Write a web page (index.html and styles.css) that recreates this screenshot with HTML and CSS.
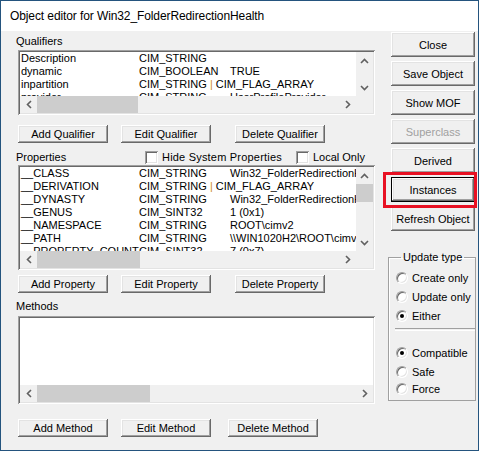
FILE: index.html
```html
<!DOCTYPE html>
<html lang="en">
<head>
    <meta charset="UTF-8">
    <meta name="viewport" content="width=device-width, initial-scale=1.0">
    <title>Object editor</title>
    <link rel="stylesheet" href="styles.css">
</head>
<body>

<div class="window">
    <div class="titlebar">Object editor for Win32_FolderRedirectionHealth</div>

    <div class="client">
        <!-- Left side: qualifiers, properties, methods -->
        <div class="left">
            <div class="label">Qualifiers</div>
            <div class="listbox qual">
                <div class="list-area">
                    <div class="row"><span class="c-name">Description</span><span class="c-type">CIM_STRING</span><span class="c-val"></span></div>
                    <div class="row"><span class="c-name">dynamic</span><span class="c-type">CIM_BOOLEAN</span><span class="c-val">TRUE</span></div>
                    <div class="row"><span class="c-name">inpartition</span><span class="c-type">CIM_STRING <i class="bar">|</i> CIM_FLAG_ARRAY</span><span class="c-val"></span></div>
                    <div class="row"><span class="c-name">provider</span><span class="c-type">CIM_STRING</span><span class="c-val">UserProfileProvider</span></div>
                </div>
                <div class="vscroll">
                    <span class="arr"><svg width="9" height="6" viewBox="0 0 9 6"><path d="M1 5 L4.5 1.5 L8 5" fill="none" stroke="#606060" stroke-width="1.6"/></svg></span>
                    <span class="vtrack"></span>
                    <span class="arr"><svg width="9" height="6" viewBox="0 0 9 6"><path d="M1 1 L4.5 4.5 L8 1" fill="none" stroke="#606060" stroke-width="1.6"/></svg></span>
                </div>
                <div class="hscroll">
                    <span class="arr"><svg width="6" height="9" viewBox="0 0 6 9"><path d="M5 1 L1.5 4.5 L5 8" fill="none" stroke="#606060" stroke-width="1.6"/></svg></span>
                    <span class="htrack"><span class="hthumb" style="width: 101px"></span></span>
                    <span class="arr"><svg width="6" height="9" viewBox="0 0 6 9"><path d="M1 1 L4.5 4.5 L1 8" fill="none" stroke="#606060" stroke-width="1.6"/></svg></span>
                </div>
                <div class="corner"></div>
            </div>
            <div class="btn-row">
                <button class="btn">Add Qualifier</button>
                <button class="btn btn-mid">Edit Qualifier</button>
                <button class="btn btn-del">Delete Qualifier</button>
            </div>

            <div class="prop-head">
                <span class="label">Properties</span>
                <label class="check hide-sys"><span class="box"></span>Hide System Properties</label>
                <label class="check local"><span class="box"></span>Local Only</label>
            </div>
            <div class="listbox props">
                <div class="list-area">
                    <div class="row"><span class="c-name">__CLASS</span><span class="c-type">CIM_STRING</span><span class="c-val">Win32_FolderRedirectionHealth</span></div>
                    <div class="row"><span class="c-name">__DERIVATION</span><span class="c-type">CIM_STRING <i class="bar">|</i> CIM_FLAG_ARRAY</span><span class="c-val"></span></div>
                    <div class="row"><span class="c-name">__DYNASTY</span><span class="c-type">CIM_STRING</span><span class="c-val">Win32_FolderRedirectionHealth</span></div>
                    <div class="row"><span class="c-name">__GENUS</span><span class="c-type">CIM_SINT32</span><span class="c-val">1 (0x1)</span></div>
                    <div class="row"><span class="c-name">__NAMESPACE</span><span class="c-type">CIM_STRING</span><span class="c-val">ROOT\cimv2</span></div>
                    <div class="row"><span class="c-name">__PATH</span><span class="c-type">CIM_STRING</span><span class="c-val">\\WIN1020H2\ROOT\cimv2:Win32_FolderRedirectionHealth</span></div>
                    <div class="row"><span class="c-name">__PROPERTY_COUNT</span><span class="c-type">CIM_SINT32</span><span class="c-val">7 (0x7)</span></div>
                </div>
                <div class="vscroll">
                    <span class="arr"><svg width="9" height="6" viewBox="0 0 9 6"><path d="M1 5 L4.5 1.5 L8 5" fill="none" stroke="#606060" stroke-width="1.6"/></svg></span>
                    <span class="vtrack"><span class="vthumb"></span></span>
                    <span class="arr"><svg width="9" height="6" viewBox="0 0 9 6"><path d="M1 1 L4.5 4.5 L8 1" fill="none" stroke="#606060" stroke-width="1.6"/></svg></span>
                </div>
                <div class="hscroll">
                    <span class="arr"><svg width="6" height="9" viewBox="0 0 6 9"><path d="M5 1 L1.5 4.5 L5 8" fill="none" stroke="#606060" stroke-width="1.6"/></svg></span>
                    <span class="htrack"><span class="hthumb" style="width: 103px"></span></span>
                    <span class="arr"><svg width="6" height="9" viewBox="0 0 6 9"><path d="M1 1 L4.5 4.5 L1 8" fill="none" stroke="#606060" stroke-width="1.6"/></svg></span>
                </div>
                <div class="corner"></div>
            </div>
            <div class="btn-row prop-btns">
                <button class="btn">Add Property</button>
                <button class="btn btn-mid">Edit Property</button>
                <button class="btn btn-del">Delete Property</button>
            </div>

            <div class="label methods-label">Methods</div>
            <div class="listbox methods">
                <div class="list-area"></div>
                <div class="hscroll">
                    <span class="arr"><svg width="6" height="9" viewBox="0 0 6 9"><path d="M5 1 L1.5 4.5 L5 8" fill="none" stroke="#606060" stroke-width="1.6"/></svg></span>
                    <span class="htrack"><span class="hthumb" style="width: 113px"></span></span>
                    <span class="arr"><svg width="6" height="9" viewBox="0 0 6 9"><path d="M1 1 L4.5 4.5 L1 8" fill="none" stroke="#606060" stroke-width="1.6"/></svg></span>
                </div>
            </div>
            <div class="btn-row methods-btns">
                <button class="btn">Add Method</button>
                <button class="btn btn-mid">Edit Method</button>
                <button class="btn btn-delm">Delete Method</button>
            </div>
        </div>

        <!-- Right side: command buttons and update type -->
        <div class="right">
            <button class="btn side">Close</button>
            <button class="btn side">Save Object</button>
            <button class="btn side">Show MOF</button>
            <button class="btn side" disabled>Superclass</button>
            <button class="btn side">Derived</button>
            <div class="highlight">
                <button class="btn side default">Instances</button>
            </div>
            <button class="btn side">Refresh Object</button>

            <fieldset class="group">
                <legend>Update type</legend>
                <label class="radio"><span class="dot"></span>Create only</label>
                <label class="radio"><span class="dot"></span>Update only</label>
                <label class="radio"><span class="dot on"></span>Either</label>
                <div class="sep"></div>
                <label class="radio compat"><span class="dot on"></span>Compatible</label>
                <label class="radio"><span class="dot"></span>Safe</label>
                <label class="radio force"><span class="dot"></span>Force</label>
            </fieldset>
        </div>
    </div>
</div>

</body>
</html>
```

FILE: styles.css
```css
body {
    margin: 0;
    padding: 0;
    font-family: 'Liberation Sans', Arial, sans-serif;
    font-size: 11px;
    color: #000;
    background-color: #f0f0f0;
}
.window {
    width: 479px;
    height: 451px;
    box-sizing: border-box;
    border: 1px solid #24547e;
    background-color: #f0f0f0;
    display: flex;
    flex-direction: column;
}
.titlebar {
    height: 30px;
    line-height: 30px;
    padding-left: 9px;
    background-color: #ffffff;
    font-size: 12px;
    letter-spacing: -0.1px;
    white-space: nowrap;
}
.client {
    flex: 1;
    display: flex;
}
.left {
    width: 357px;
    padding: 4px 0 0 17px;
    display: flex;
    flex-direction: column;
}
.label {
    height: 13px;
    line-height: 13px;
    margin-left: -2px;
}

/* list boxes */
.listbox {
    box-sizing: border-box;
    padding: 2px;
    background-color: #f0f0f0;
    box-shadow: inset 1px 1px #a0a0a0, inset -1px -1px #ffffff, inset 2px 2px #696969, inset -2px -2px #e3e3e3;
    display: grid;
    grid-template-columns: 1fr 17px;
    grid-template-rows: 1fr 17px;
    margin-top: 2px;
}
.qual {
    height: 65px;
}
.props {
    height: 105px;
    margin-top: 1px;
}
.methods {
    height: 88px;
    margin-top: 3px;
    grid-template-columns: 1fr;
}
.list-area {
    background-color: #ffffff;
    overflow: hidden;
    padding-left: 1px;
}
.row {
    display: flex;
    height: 13px;
    line-height: 13px;
    white-space: nowrap;
}
.c-name {
    flex: none;
    width: 118px;
}
.c-type {
    flex: none;
    width: 91px;
}
.c-val {
    flex: none;
}
.bar {
    font-style: normal;
    color: #d08a2a;
}
.vscroll {
    display: flex;
    flex-direction: column;
    background-color: #f0f0f0;
}
.hscroll {
    display: flex;
    background-color: #f0f0f0;
}
.arr {
    flex: none;
    width: 17px;
    height: 17px;
    display: flex;
    align-items: center;
    justify-content: center;
}
.vtrack {
    flex: 1;
}
.vthumb {
    display: block;
    height: 18px;
    background-color: #cdcdcd;
}
.htrack {
    flex: 1;
    display: flex;
}
.hthumb {
    display: block;
    height: 17px;
    background-color: #cdcdcd;
}
.corner {
    background-color: #f0f0f0;
}

/* push buttons */
.btn {
    font-family: 'Liberation Sans', Arial, sans-serif;
    font-size: 11px;
    color: #000;
    background-color: #f0f0f0;
    border: none;
    padding: 0;
    margin: 0;
    box-shadow: inset -1px -1px #696969, inset 1px 1px #ffffff, inset -2px -2px #a0a0a0, inset 2px 2px #e3e3e3;
}
.btn:disabled {
    color: #a0a0a0;
}
.btn-row {
    display: flex;
    flex: none;
    height: 18px;
    margin-top: 10px;
}
.btn-row .btn {
    width: 90px;
    height: 18px;
}
.btn-row .btn-mid {
    margin-left: 13px;
}
.btn-row .btn-del {
    margin-left: 24px;
}
.btn-row .btn-delm {
    margin-left: 17px;
}
.prop-btns {
    margin-top: 5px;
}
.methods-label {
    margin-top: 7px;
}
.methods-btns {
    margin-top: 15px;
}

/* properties header with check boxes */
.prop-head {
    display: flex;
    flex: none;
    align-items: center;
    height: 13px;
    margin-top: 8px;
}
.prop-head .label {
    width: 129px;
}
.check {
    display: flex;
    align-items: center;
    white-space: nowrap;
    line-height: 13px;
}
.hide-sys {
    letter-spacing: 0.2px;
}
.box {
    width: 13px;
    height: 13px;
    box-sizing: border-box;
    background-color: #ffffff;
    box-shadow: inset 1px 1px #a0a0a0, inset -1px -1px #ffffff, inset 2px 2px #696969, inset -2px -2px #e3e3e3;
    margin-right: 4px;
}
.local {
    margin-left: 14px;
}

/* right column */
.right {
    width: 84px;
    margin-left: 16px;
    padding-top: 1px;
    display: flex;
    flex-direction: column;
}
.side {
    width: 84px;
    height: 25px;
    margin-bottom: 4px;
}
.highlight {
    position: relative;
    margin-bottom: 4px;
}
.highlight .side {
    margin-bottom: 0;
}
.highlight::after {
    content: "";
    position: absolute;
    left: -8px;
    top: -5px;
    width: 94px;
    height: 36px;
    box-sizing: border-box;
    border: 3px solid #e81123;
}
.default {
    box-shadow: inset 0 0 0 1px #000, inset -2px -2px #696969, inset 2px 2px #ffffff, inset -3px -3px #a0a0a0, inset 3px 3px #e3e3e3;
}

/* update type group */
.group {
    margin: 16px 0 0 -3px;
    width: 88px;
    height: 150px;
    box-sizing: border-box;
    padding: 4px 0 0 7px;
    border: 1px solid #a0a0a0;
    box-shadow: inset 1px 1px #ffffff;
}
.group legend {
    padding: 0 2px;
    margin-left: 5px;
    line-height: 13px;
}
.radio {
    display: flex;
    align-items: center;
    height: 19px;
    white-space: nowrap;
}
.dot {
    width: 12px;
    height: 12px;
    box-sizing: border-box;
    border-radius: 50%;
    background-color: #ffffff;
    border: 1px solid;
    border-color: #a0a0a0 #ffffff #ffffff #a0a0a0;
    box-shadow: inset 1px 1px #696969, inset -1px -1px #e3e3e3;
    margin-right: 4px;
    display: flex;
    align-items: center;
    justify-content: center;
}
.dot.on::after {
    content: "";
    width: 4px;
    height: 4px;
    border-radius: 50%;
    background-color: #000;
}
.sep {
    height: 1px;
    margin: 3px 0 0 -1px;
    width: 80px;
    border-top: 1px solid #a0a0a0;
    border-bottom: 1px solid #ffffff;
}
.compat {
    margin-top: 12px;
}
.force {
    margin-top: -2px;
}
```
